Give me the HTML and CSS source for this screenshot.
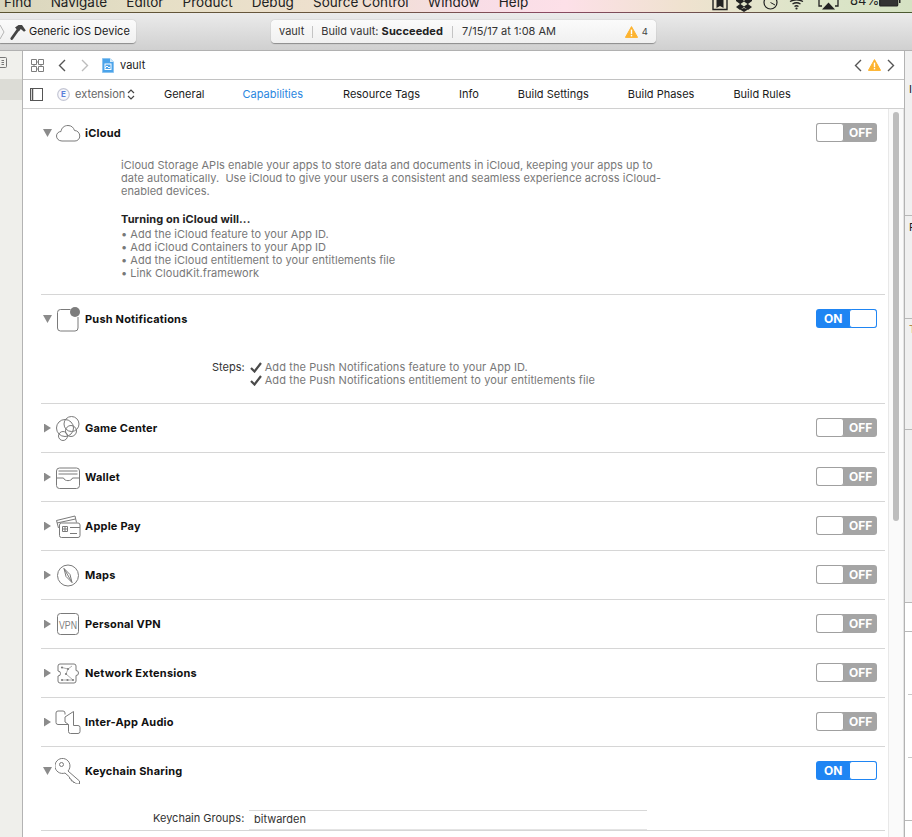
FILE: index.html
```html
<!DOCTYPE html>
<html lang="en">
<head>
<meta charset="utf-8">
<title>vault - Capabilities</title>
<link rel="stylesheet" href="styles.css">
</head>
<body>
<svg class="defs" width="0" height="0" aria-hidden="true">
  <symbol id="warn" viewBox="0 0 13 12">
    <path d="M6.5 .6 12.6 11.4H.4Z" fill="#fdb32f" stroke="#fdb32f" stroke-linejoin="round"/>
    <rect x="5.8" y="3.6" width="1.4" height="4.6" fill="#fff"/>
    <rect x="5.8" y="9" width="1.4" height="1.4" fill="#fff"/>
  </symbol>
</svg>
<div class="screen">
  <header class="menubar">
    <nav class="menus">
      <span>Find</span><span>Navigate</span><span>Editor</span><span>Product</span><span>Debug</span><span>Source Control</span><span>Window</span><span>Help</span>
    </nav>
    <div class="status">
      <svg class="st st-book" width="16" height="12" viewBox="0 0 16 12"><path d="M1 0V9.500H15V0" fill="none" stroke="#222" stroke-width="1.400"/><path d="M4.500 0V8L8 6l3.500 2V0Z" fill="#222"/></svg>
      <svg class="st st-drop" width="16" height="12" viewBox="0 0 16 12"><path d="M0 1 4 4 0 7l4 3 4-3 4 3 4-3-4-3 4-3V0H9L8 1 7 0H0Z" fill="#222"/><path d="M8 1.500 4.500 4 8 6.500 11.500 4Z" fill="#dfe3c8"/><path d="M4 9.500 8 12l4-2.500-4-1.500Z" fill="#222"/></svg>
      <svg class="st st-clock" width="15" height="12" viewBox="0 0 15 12"><circle cx="7.500" cy="2.500" r="6.500" fill="none" stroke="#222" stroke-width="1.200"/><path d="M7.500 2.500 12 5" stroke="#222" fill="none"/></svg>
      <svg class="st st-wifi" width="15" height="12" viewBox="0 0 15 12"><path d="M1 1.500Q7.500-2 14 1.500M3.500 4Q7.500 1.500 11.500 4M5.500 6.500Q7.500 5 9.500 6.500" fill="none" stroke="#222" stroke-width="1.300"/><circle cx="7.500" cy="8.500" r="1.100" fill="#222"/></svg>
      <svg class="st st-air" width="21" height="12" viewBox="0 0 21 12"><path d="M4 6H1V0M20 0V6H17" fill="none" stroke="#222" stroke-width="1.300"/><path d="M10.500 2.500 17 9.500H4Z" fill="#222"/></svg>
      <span class="batt-pct">84%</span>
      <svg class="st st-batt" width="23" height="12" viewBox="0 0 23 12"><rect x=".7" y="-5" width="18" height="11" rx="1" fill="#333" stroke="#222" stroke-width="1.200"/><rect x="20" y="0" width="1.500" height="3" fill="#222"/></svg>
    </div>
  </header>

  <div class="toolbar">
    <div class="scheme">
      <svg class="crumb" width="5" height="16" viewBox="0 0 5 16"><path d="M0 1 4 8 0 15" fill="none" stroke="#b5b5b5"/></svg>
      <svg class="hammer" width="16" height="16" viewBox="0 0 16 16"><path d="M1.800 14.500 8.500 5" stroke="#444" stroke-width="2.800" stroke-linecap="round"/><path d="M5 3.500 8.500 1H12L15.800 6.500 14 7.800 10.800 5 8.800 7.500Z" fill="#444"/></svg>
      <span>Generic iOS Device</span>
    </div>
    <div class="activity">
      <span>vault</span>
      <i class="bar"></i>
      <span>Build vault: <b>Succeeded</b></span>
      <i class="bar"></i>
      <span>7/15/17 at 1:08 AM</span>
      <svg class="warn-a" width="13" height="12"><use href="#warn"/></svg>
      <span class="count">4</span>
    </div>
  </div>

  <div class="body">
    <aside class="nav">
      <div class="nav-top">
        <svg width="7" height="11" viewBox="0 0 7 11"><path d="M0 .5H5.500a1 1 0 0 1 1 1V9.500a1 1 0 0 1-1 1H0M1.500 3.500H4M1.500 5.500H4M1.500 7.500H4" fill="none" stroke="#777"/></svg>
      </div>
      <div class="nav-sel"></div>
    </aside>

    <main class="main">
      <div class="jumpbar">
        <svg class="grid-ic" width="13" height="13" viewBox="0 0 13 13"><path d="M.5.500H5.500V5.500H.5ZM7.500 .5H12.500V5.500H7.500ZM.5 7.500H5.500V12.500H.5ZM7.500 7.500H12.500V12.500H7.500ZM5.500 3H7.500M5.500 10H7.500M10 5.500V7.500M3 5.500V7.500" fill="none" stroke="#7d7d7d"/></svg>
        <svg class="chev" width="8" height="13" viewBox="0 0 8 13"><path d="M7 1 1.500 6.500 7 12" fill="none" stroke="#555" stroke-width="1.400"/></svg>
        <svg class="chev fwd" width="8" height="13" viewBox="0 0 8 13"><path d="M1 1 6.500 6.500 1 12" fill="none" stroke="#bdbdbd" stroke-width="1.400"/></svg>
        <svg class="file-ic" width="12" height="15" viewBox="0 0 12 15"><path d="M.5.500H8L11.500 4V14.500H.5Z" fill="#4ba3ea" stroke="#8cc4f0"/><path d="M8 .5V4H11.500Z" fill="#d6ebfb"/><rect x="3" y="6" width="6" height="5.500" fill="none" stroke="#fff"/><path d="M3 10 5 8l2 2 1-1" stroke="#fff" fill="none"/></svg>
        <span class="crumb-name">vault</span>
        <div class="issue-nav">
          <svg width="8" height="13" viewBox="0 0 8 13"><path d="M7 1 1.500 6.500 7 12" fill="none" stroke="#555" stroke-width="1.400"/></svg>
          <svg width="13" height="12"><use href="#warn"/></svg>
          <svg width="8" height="13" viewBox="0 0 8 13"><path d="M1 1 6.500 6.500 1 12" fill="none" stroke="#555" stroke-width="1.400"/></svg>
        </div>
      </div>

      <div class="tabbar">
        <svg class="panel-ic" width="13" height="13" viewBox="0 0 13 13"><rect x=".5" y=".5" width="12" height="12" fill="none" stroke="#555"/><path d="M2.500 1V12" stroke="#555" stroke-width="1.500"/></svg>
        <svg class="ext-ic" width="13" height="13" viewBox="0 0 13 13"><circle cx="6.500" cy="6.500" r="5.800" fill="#f8f8fc" stroke="#c4c6d4" stroke-width="1.200"/><text x="6.500" y="9.300" class="ext-e">E</text></svg>
        <span class="target">extension</span>
        <svg class="updown" width="8" height="11" viewBox="0 0 8 11"><path d="M1 4 4 1l3 3M1 7l3 3 3-3" fill="none" stroke="#444" stroke-width="1.200"/></svg>
        <div class="tabs">
          <span>General</span><span class="active">Capabilities</span><span>Resource Tags</span><span>Info</span><span>Build Settings</span><span>Build Phases</span><span>Build Rules</span>
        </div>
      </div>

      <div class="content">
        <div class="list">
          <section class="cap">
            <div class="head">
              <i class="tri down"></i>
              <svg class="ic" viewBox="0 0 26 26"><path d="M7 21C3.500 21 1.500 18.500 1.500 16 1.500 13.500 3.500 11.500 6 11.500 6.500 8 9 5.500 13 5.500 16.500 5.500 18.500 7.500 19.500 10.500 22.500 10.500 24.800 13 24.800 16 24.800 19 22.500 21 20 21Z"/></svg>
              <h3>iCloud</h3>
              <div class="toggle off"><i class="knob"></i><span>OFF</span></div>
            </div>
            <div class="desc">
              <p>iCloud Storage APIs enable your apps to store data and documents in iCloud, keeping your apps up to<br>date automatically.&nbsp; Use iCloud to give your users a consistent and seamless experience across iCloud-<br>enabled devices.</p>
              <p class="will"><b>Turning on iCloud will...</b></p>
              <p>• Add the iCloud feature to your App ID.<br>• Add iCloud Containers to your App ID<br>• Add the iCloud entitlement to your entitlements file<br>• Link CloudKit.framework</p>
            </div>
          </section>

          <section class="cap">
            <div class="head">
              <i class="tri down"></i>
              <svg class="ic" viewBox="0 0 26 26"><path d="M15.500 3.500H5.500a3 3 0 0 0-3 3V22a3 3 0 0 0 3 3H20a3 3 0 0 0 3-3V11"/><circle class="solid" cx="20" cy="6" r="5"/></svg>
              <h3>Push Notifications</h3>
              <div class="toggle on"><span>ON</span><i class="knob"></i></div>
            </div>
            <div class="steps">
              <span class="steps-label">Steps:</span>
              <ul>
                <li><svg class="check" viewBox="0 0 12 11"><path d="M1 6 4.500 9.500 11 1" fill="none" stroke="#4a4a4a" stroke-width="2.200"/></svg>Add the Push Notifications feature to your App ID.</li>
                <li><svg class="check" viewBox="0 0 12 11"><path d="M1 6 4.500 9.500 11 1" fill="none" stroke="#4a4a4a" stroke-width="2.200"/></svg>Add the Push Notifications entitlement to your entitlements file</li>
              </ul>
            </div>
          </section>

          <section class="cap">
            <div class="head">
              <i class="tri right"></i>
              <svg class="ic" viewBox="0 0 26 26"><circle cx="10" cy="13" r="8.500"/><circle cx="16.500" cy="9" r="7.500"/><circle cx="16" cy="16" r="5.500"/><circle cx="8" cy="21" r="4.500"/></svg>
              <h3>Game Center</h3>
              <div class="toggle off"><i class="knob"></i><span>OFF</span></div>
            </div>
          </section>

          <section class="cap">
            <div class="head">
              <i class="tri right"></i>
              <svg class="ic" viewBox="0 0 26 26"><rect x="1.500" y="4" width="23" height="20.500" rx="3"/><path d="M3.500 7H22.500M3.500 10H22.500M1.500 14H8.500C9.500 17.500 16.500 17.500 17.500 14H24.500"/></svg>
              <h3>Wallet</h3>
              <div class="toggle off"><i class="knob"></i><span>OFF</span></div>
            </div>
          </section>

          <section class="cap">
            <div class="head">
              <i class="tri right"></i>
              <svg class="ic" viewBox="0 0 26 26"><path d="M3.500 15 1.500 7.500 20 3 21.500 9.500M2 10 20.500 6"/><rect x="4.500" y="10" width="20.500" height="14.500" rx="2"/><path d="M7.500 13.500H12.500V18.500H7.500ZM10 13.500V18.500M7.500 16H12.500M15 14.500H25M15 20.500H22"/></svg>
              <h3>Apple Pay</h3>
              <div class="toggle off"><i class="knob"></i><span>OFF</span></div>
            </div>
          </section>

          <section class="cap">
            <div class="head">
              <i class="tri right"></i>
              <svg class="ic" viewBox="0 0 26 26"><circle cx="13" cy="13.500" r="10.500"/><path d="M9 6.500 17 20.500 15 12.500ZM9 6.500 11 14.500 17 20.500"/></svg>
              <h3>Maps</h3>
              <div class="toggle off"><i class="knob"></i><span>OFF</span></div>
            </div>
          </section>

          <section class="cap">
            <div class="head">
              <i class="tri right"></i>
              <svg class="ic" viewBox="0 0 26 26"><rect x="2.500" y="2.500" width="21" height="21" rx="3"/><text class="vpn" x="13" y="17.500" textLength="18" lengthAdjust="spacingAndGlyphs">VPN</text></svg>
              <h3>Personal VPN</h3>
              <div class="toggle off"><i class="knob"></i><span>OFF</span></div>
            </div>
          </section>

          <section class="cap">
            <div class="head">
              <i class="tri right"></i>
              <svg class="ic" viewBox="0 0 26 26"><path d="M5 4H19a2 2 0 0 1 2 2V10.500a2.500 2.500 0 1 1 0 5V21a2 2 0 0 1-2 2H5a2 2 0 0 1-2-2V16a2.500 2.500 0 0 0 0-5V6a2 2 0 0 1 2-2Z"/><path class="thin" d="M7 7.500 13 9 11 14 18 20M7 20H18M13 9 17 6"/><circle class="solid" cx="7" cy="7.500" r="1.100"/><circle class="solid" cx="13" cy="9" r="1.100"/><circle class="solid" cx="11" cy="14" r="1.100"/><circle class="solid" cx="7" cy="20" r="1.100"/><circle class="solid" cx="12.500" cy="20" r="1.100"/><circle class="solid" cx="18" cy="20" r="1.100"/></svg>
              <h3>Network Extensions</h3>
              <div class="toggle off"><i class="knob"></i><span>OFF</span></div>
            </div>
          </section>

          <section class="cap">
            <div class="head">
              <i class="tri right"></i>
              <svg class="ic" viewBox="0 0 26 26"><path d="M10 5.500V4A2 2 0 0 0 8 2H3A2 2 0 0 0 1 4V13.500A2 2 0 0 0 3 15.500H13.500V22.500A2 2 0 0 0 15.500 24.500H23A2 2 0 0 0 25 22.500V18.500A2 2 0 0 0 23 16.500H18.500V2.500L10 8V13L13.500 15.500"/></svg>
              <h3>Inter-App Audio</h3>
              <div class="toggle off"><i class="knob"></i><span>OFF</span></div>
            </div>
          </section>

          <section class="cap">
            <div class="head">
              <i class="tri down"></i>
              <svg class="ic" viewBox="0 0 26 26"><path d="M13 13 24.500 23V26H21.500L20 24.500 18.500 24.500 18 23H16.500L16 21 14.500 20.500 14.500 19 10 15A7.500 7.500 0 1 1 13 13Z"/><circle cx="6.500" cy="6.500" r="2"/></svg>
              <h3>Keychain Sharing</h3>
              <div class="toggle on"><span>ON</span><i class="knob"></i></div>
            </div>
            <div class="groups">
              <span class="groups-label">Keychain Groups:</span>
              <div class="groups-field">bitwarden</div>
            </div>
          </section>
        </div>
        <div class="scrollbar"><div class="thumb"></div></div>
      </div>
    </main>

    <aside class="inspector">
      <div class="insp-sec s1"><span>I</span></div>
      <div class="insp-sec s2"><span>R</span></div>
      <div class="insp-sec s3"><span class="tan">T</span></div>
      <div class="insp-sec s4"></div>
      <div class="insp-white w1"></div>
      <div class="insp-white w2"><i></i></div>
      <div class="insp-white w3"><i></i></div>
      <div class="insp-white w4"></div>
      <div class="insp-white w5"></div>
    </aside>
  </div>
</div>
</body>
</html>
```
FILE: styles.css
```css
* { box-sizing: border-box; margin: 0; padding: 0; }
html, body { width: 912px; height: 837px; overflow: hidden; background: #fff; }
body { font: 11px/13px Inter, "Liberation Sans", sans-serif; color: #1a1a1a; }
.defs { display: block; height: 0; }
.screen { display: flex; flex-direction: column; width: 912px; height: 837px; overflow: hidden; }

/* menu bar */
.menubar {
  flex: none; height: 13px; display: flex; justify-content: space-between; align-items: flex-end; overflow: hidden;
  background: linear-gradient(90deg, #d9d6bd 0%, #e6dfc6 18%, #efe0cf 38%, #f8dde6 52%, #fde0e8 62%, #efe2cf 75%, #dde5c9 88%, #d5e2c3 100%);
  border-bottom: 1px solid;
  border-image: linear-gradient(90deg, #5b5432, #6b5640 40%, #8a4a62 60%, #4a5a30) 1;
}
.menus { display: flex; gap: 19.2px; padding-left: 4px; height: 12px; align-items: flex-end; font-size: 13.5px; line-height: 16px; color: #222; }
.menus span { display: block; margin-bottom: 2px; white-space: nowrap; }
.status { display: flex; height: 12px; align-items: flex-start; padding-right: 10px; }
.st { display: block; flex: none; }
.st-drop { margin-left: 8px; }
.st-clock { margin-left: 11px; }
.st-wifi { margin-left: 11px; }
.st-air { margin-left: 14px; }
.batt-pct { margin-left: 11px; width: 26px; font-size: 13px; line-height: 16px; margin-top: -8px; white-space: nowrap; color: #222; }
.st-batt { margin-left: 3px; }

/* toolbar */
.toolbar {
  flex: none; height: 38px; display: flex; align-items: center;
  background: linear-gradient(#ebebeb, #d0d0d0);
  border-bottom: 1px solid #b1b1b1;
}
.scheme {
  width: 136px; height: 23px; display: flex; align-items: center; flex: none;
  background: linear-gradient(#fbfbfb, #f0f0f0); border-radius: 0 4px 4px 0; box-shadow: 0 .5px 1px rgba(0,0,0,.35);
}
.crumb { margin-right: 5px; }
.hammer { margin-right: 3px; }
.scheme span { font-size: 11px; white-space: nowrap; }
.activity {
  margin-left: 135px; width: 385px; height: 23px; padding-left: 8px; display: flex; align-items: center; flex: none; white-space: nowrap;
  background: linear-gradient(#fbfbfb, #f0f0f0); border-radius: 4px; box-shadow: 0 .5px 1px rgba(0,0,0,.35); color: #333;
}
.activity b { font-weight: 700; color: #222; letter-spacing: .1px; }
.bar { display: block; width: 1px; height: 12px; background: #c4c4c4; margin: 0 8px; }
.bar + span + .bar { margin: 0 9px; }
.warn-a { margin-left: auto; margin-right: 4px; }
.count { font-size: 9.5px; margin-right: 8px; color: #444; }

/* layout */
.body { flex: 1; display: flex; min-height: 0; }
.nav { flex: none; width: 23px; background: #efefeb; border-right: 1px solid #b3b3b3; }
.nav-top { height: 28px; padding-top: 6px; display: flex; background: #f0f0ec; }
.nav-sel { height: 21px; background: #dcdcd6; }
.main { flex: 1; min-width: 0; display: flex; flex-direction: column; background: #fff; }

/* jump bar */
.jumpbar { flex: none; height: 29px; display: flex; align-items: center; padding-left: 8px; border-bottom: 1px solid #c2c2c2; }
.grid-ic { margin-right: 14px; }
.chev { margin-right: 15px; }
.file-ic { margin-left: -1px; margin-right: 6px; }
.chev.fwd { margin-right: 14px; }
.crumb-name { font-size: 11px; }
.issue-nav { margin-left: auto; margin-right: 9px; display: flex; align-items: center; gap: 6px; }

/* tabs */
.tabbar { flex: none; height: 29px; display: flex; align-items: center; padding-left: 7px; border-bottom: 1px solid #d0d0d0; }
.panel-ic { margin-right: 14px; }
.ext-ic { margin-right: 5px; }
.ext-e { font: 700 8px Inter, sans-serif; fill: #5a7fd8; text-anchor: middle; }
.target { color: #666; width: 52px; white-space: nowrap; }
.updown { flex: none; }
.tabs { margin-left: 29px; display: flex; gap: 39px; white-space: nowrap; color: #1a1a1a; }
.tabs .active { color: #2a86e0; margin-left: -1px; margin-right: 1px; }

/* capability list */
.content { flex: 1; min-height: 0; display: flex; overflow: hidden; }
.list { flex: 1; min-width: 0; padding: 0 3px 0 18px; }
.cap { border-bottom: 1px solid #d6d6d6; }
.head { height: 48px; display: flex; align-items: center; padding-right: 8px; }
.tri { display: block; flex: none; background: #8b8b8b; }
.tri.down { width: 9px; height: 8px; margin: 0 3px 0 2px; clip-path: polygon(0 0, 100% 0, 50% 100%); }
.tri.right { width: 7px; height: 9px; margin: 0 4px 0 3px; clip-path: polygon(0 0, 100% 50%, 0 100%); }
.ic { flex: none; width: 26px; height: 26px; fill: none; stroke: #7a7a7a; stroke-width: 1; }
.ic .solid { fill: #7d7d7d; stroke: none; }
.ic .thin { stroke: #999; stroke-width: .8; }
.ic .vpn { font: 400 10.5px "Liberation Sans", sans-serif; fill: #808080; stroke: none; text-anchor: middle; }
.head h3 { margin-left: 4px; font-size: 11px; font-weight: 700; color: #111; white-space: nowrap; letter-spacing: .2px; }
.toggle {
  margin-left: auto; margin-bottom: 1px; flex: none; width: 61px; height: 19px; display: flex; align-items: center; border-radius: 3px; overflow: hidden;
  color: #fff; font-size: 12px; font-weight: 700;
}
.toggle .knob { display: block; width: 28px; height: 19px; background: #fff; border-radius: 3px; }
.toggle.off { background: #a5a5a5; }
.toggle.off .knob { border: 1px solid #a0a0a0; }
.toggle.off span { margin-left: 5px; }
.toggle.on { background: #1f85f3; justify-content: space-between; padding-left: 8px; }
.toggle.on .knob { border: 1px solid #1f85f3; }
.desc { padding: 2px 0 14px 80px; color: #787878; white-space: nowrap; letter-spacing: .03px; }
.desc .will { margin: 15px 0 2px; }
.desc b { color: #222; font-weight: 700; letter-spacing: .1px; }
.steps { display: flex; padding: 18px 0 16px 171px; white-space: nowrap; }
.steps-label { color: #333; margin-right: 5px; }
.steps ul { list-style: none; color: #787878; letter-spacing: .09px; }
.steps li { display: flex; align-items: center; }
.check { width: 12px; height: 11px; margin-right: 3px; flex: none; }
.groups { display: flex; align-items: center; padding: 15px 0 0 112px; white-space: nowrap; }
.groups-label { color: #333; width: 96px; margin-bottom: 4px; }
.groups-field { width: 398px; height: 20px; padding: 2px 0 0 5px; color: #333; border-top: 1px solid #d8d8d8; border-bottom: 1px solid #e4e4e4; }
.scrollbar { flex: none; width: 16px; padding: 3px 4px 0; background: #fafafa; border-left: 1px solid #e8e8e8; border-right: 1px solid #e4e4e4; }
.thumb { height: 409px; border-radius: 4px; background: #bdbdbd; }

/* inspector */
.inspector { flex: none; width: 8px; display: flex; flex-direction: column; border-left: 1px solid #b3b3b3; font-size: 11px; overflow: hidden; }
.insp-sec { flex: none; background: #f0f0f0; border-bottom: 1px solid #b8b8b8; padding: 32px 0 0 4px; }
.insp-sec span { display: block; white-space: nowrap; }
.insp-sec .tan { color: #b58a4a; }
.s1 { height: 165px; }
.s2 { height: 103px; padding-top: 5px; }
.s3 { height: 111px; padding-top: 4px; }
.s4 { height: 173px; padding: 0; }
.insp-white { flex: none; background: #fff; }
.w1 { height: 29px; border-bottom: 1px solid #b8b8b8; }
.w2 { height: 63px; position: relative; }
.w3 { height: 63px; position: relative; }
.w2 i, .w3 i { position: absolute; left: 3px; bottom: 0; width: 5px; height: 1px; background: #c8c8c8; }
.w4 { height: 63px; border-bottom: 1px solid #b8b8b8; }
.w5 { flex: 1; }
```
